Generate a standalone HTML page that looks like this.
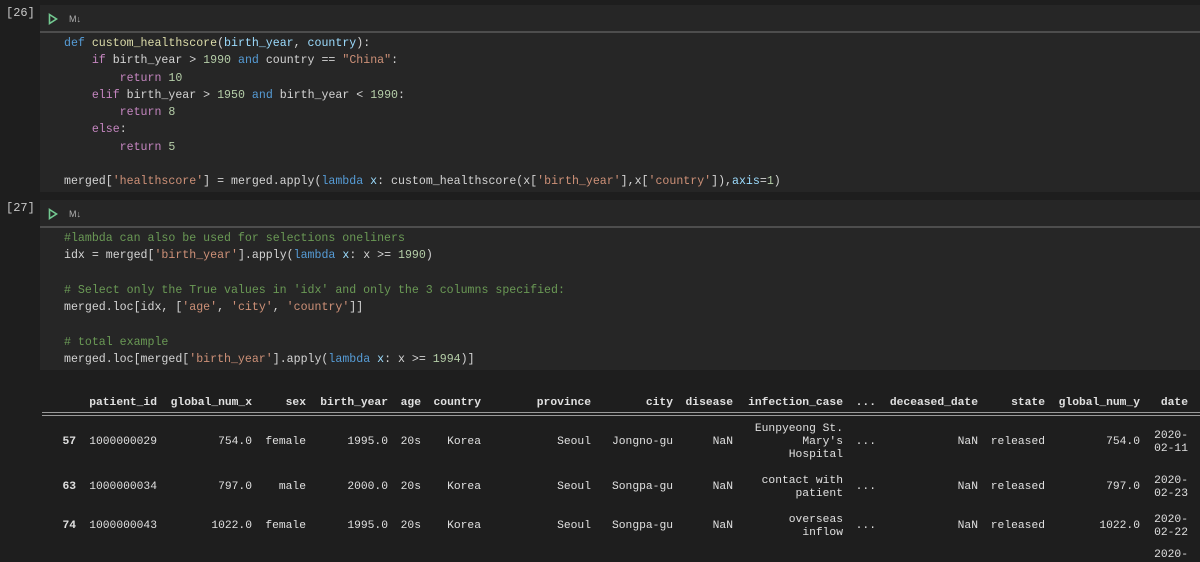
<!DOCTYPE html>
<html><head><meta charset="utf-8"><style>
body{margin:0;width:1200px;height:552px;background:#1e1e1e;overflow:hidden;position:relative;font-family:"Liberation Mono",monospace;}
.cell{position:absolute;left:40px;width:1160px;background:#262626;}
.bar{position:absolute;left:0;right:0;height:2px;background:#4d4d4d;}
.lbl{position:absolute;left:6px;color:#c8c8c8;font-size:12px;}
.run{position:absolute;left:8px;}
.md{position:absolute;left:29px;color:#b0b0b0;font-size:9px;font-family:"Liberation Sans",sans-serif;}
.code{position:absolute;left:24px;font-size:11.6px;line-height:17.3px;color:#d4d4d4;white-space:pre;}
.k{color:#569cd6}.f{color:#dcdcaa}.p{color:#9cdcfe}.c{color:#c586c0}.n{color:#b5cea8}.s{color:#ce9178}.g{color:#6a9955}
.t{position:absolute;font-size:11.3px;line-height:13px;color:#e0e0e0;white-space:pre;text-align:right;margin-top:3px;}
.h{font-weight:bold;}
</style></head><body>
<div class="lbl" style="top:6px">[26]</div>
<div class="cell" style="top:5px;height:187px">
<svg class="run" style="top:8px" width="10" height="12"><path d="M1.5 1.5 L8.5 6 L1.5 10.5 Z" fill="none" stroke="#73c991" stroke-width="1.6"/></svg>
<div class="md" style="top:9px">M↓</div>
<div class="bar" style="top:26px"></div>
<div class="code" style="top:30px"><span class="k">def</span> <span class="f">custom_healthscore</span>(<span class="p">birth_year</span>, <span class="p">country</span>):
    <span class="c">if</span> birth_year &gt; <span class="n">1990</span> <span class="k">and</span> country == <span class="s">"China"</span>:
        <span class="c">return</span> <span class="n">10</span>
    <span class="c">elif</span> birth_year &gt; <span class="n">1950</span> <span class="k">and</span> birth_year &lt; <span class="n">1990</span>:
        <span class="c">return</span> <span class="n">8</span>
    <span class="c">else</span>:
        <span class="c">return</span> <span class="n">5</span>

merged[<span class="s">'healthscore'</span>] = merged.apply(<span class="k">lambda</span> <span class="p">x</span>: custom_healthscore(x[<span class="s">'birth_year'</span>],x[<span class="s">'country'</span>]),<span class="p">axis</span>=<span class="n">1</span>)</div>
</div>
<div class="lbl" style="top:201px">[27]</div>
<div class="cell" style="top:200px;height:170px">
<svg class="run" style="top:8px" width="10" height="12"><path d="M1.5 1.5 L8.5 6 L1.5 10.5 Z" fill="none" stroke="#73c991" stroke-width="1.6"/></svg>
<div class="md" style="top:9px">M↓</div>
<div class="bar" style="top:26px"></div>
<div class="code" style="top:30px"><span class="g">#lambda can also be used for selections oneliners</span>
idx = merged[<span class="s">'birth_year'</span>].apply(<span class="k">lambda</span> <span class="p">x</span>: x &gt;= <span class="n">1990</span>)

<span class="g"># Select only the True values in 'idx' and only the 3 columns specified:</span>
merged.loc[idx, [<span class="s">'age'</span>, <span class="s">'city'</span>, <span class="s">'country'</span>]]

<span class="g"># total example</span>
merged.loc[merged[<span class="s">'birth_year'</span>].apply(<span class="k">lambda</span> <span class="p">x</span>: x &gt;= <span class="n">1994</span>)]</div>
</div>
<div style="position:absolute;left:42px;right:0;top:412px;height:1px;background:#9a9a9a"></div>
<div style="position:absolute;left:42px;right:0;top:415px;height:1px;background:#9a9a9a"></div>

<div class="t h" style="right:1043px;top:394px">patient_id</div>
<div class="t h" style="right:948px;top:394px">global_num_x</div>
<div class="t h" style="right:894px;top:394px">sex</div>
<div class="t h" style="right:812px;top:394px">birth_year</div>
<div class="t h" style="right:779px;top:394px">age</div>
<div class="t h" style="right:719px;top:394px">country</div>
<div class="t h" style="right:609px;top:394px">province</div>
<div class="t h" style="right:527px;top:394px">city</div>
<div class="t h" style="right:467px;top:394px">disease</div>
<div class="t h" style="right:357px;top:394px">infection_case</div>
<div class="t h" style="right:324px;top:394px">...</div>
<div class="t h" style="right:222px;top:394px">deceased_date</div>
<div class="t h" style="right:155px;top:394px">state</div>
<div class="t h" style="right:60px;top:394px">global_num_y</div>
<div class="t h" style="right:12px;top:394px">date</div>

<div class="t h" style="right:1124px;top:433px">57</div>
<div class="t" style="right:1043px;top:433px">1000000029</div>
<div class="t" style="right:948px;top:433px">754.0</div>
<div class="t" style="right:894px;top:433px">female</div>
<div class="t" style="right:812px;top:433px">1995.0</div>
<div class="t" style="right:779px;top:433px">20s</div>
<div class="t" style="right:719px;top:433px">Korea</div>
<div class="t" style="right:609px;top:433px">Seoul</div>
<div class="t" style="right:527px;top:433px">Jongno-gu</div>
<div class="t" style="right:467px;top:433px">NaN</div>
<div class="t" style="right:357px;top:420px">Eunpyeong St.
Mary's
Hospital</div>
<div class="t" style="right:324px;top:433px">...</div>
<div class="t" style="right:222px;top:433px">NaN</div>
<div class="t" style="right:155px;top:433px">released</div>
<div class="t" style="right:60px;top:433px">754.0</div>
<div class="t" style="right:12px;top:427px;text-align:left">2020-
02-11</div>

<div class="t h" style="right:1124px;top:478px">63</div>
<div class="t" style="right:1043px;top:478px">1000000034</div>
<div class="t" style="right:948px;top:478px">797.0</div>
<div class="t" style="right:894px;top:478px">male</div>
<div class="t" style="right:812px;top:478px">2000.0</div>
<div class="t" style="right:779px;top:478px">20s</div>
<div class="t" style="right:719px;top:478px">Korea</div>
<div class="t" style="right:609px;top:478px">Seoul</div>
<div class="t" style="right:527px;top:478px">Songpa-gu</div>
<div class="t" style="right:467px;top:478px">NaN</div>
<div class="t" style="right:357px;top:472px">contact with
patient</div>
<div class="t" style="right:324px;top:478px">...</div>
<div class="t" style="right:222px;top:478px">NaN</div>
<div class="t" style="right:155px;top:478px">released</div>
<div class="t" style="right:60px;top:478px">797.0</div>
<div class="t" style="right:12px;top:472px;text-align:left">2020-
02-23</div>

<div class="t h" style="right:1124px;top:517px">74</div>
<div class="t" style="right:1043px;top:517px">1000000043</div>
<div class="t" style="right:948px;top:517px">1022.0</div>
<div class="t" style="right:894px;top:517px">female</div>
<div class="t" style="right:812px;top:517px">1995.0</div>
<div class="t" style="right:779px;top:517px">20s</div>
<div class="t" style="right:719px;top:517px">Korea</div>
<div class="t" style="right:609px;top:517px">Seoul</div>
<div class="t" style="right:527px;top:517px">Songpa-gu</div>
<div class="t" style="right:467px;top:517px">NaN</div>
<div class="t" style="right:357px;top:511px">overseas
inflow</div>
<div class="t" style="right:324px;top:517px">...</div>
<div class="t" style="right:222px;top:517px">NaN</div>
<div class="t" style="right:155px;top:517px">released</div>
<div class="t" style="right:60px;top:517px">1022.0</div>
<div class="t" style="right:12px;top:511px;text-align:left">2020-
02-22</div>
<div class="t" style="right:12px;top:546px;text-align:left">2020-</div>
</body></html>
